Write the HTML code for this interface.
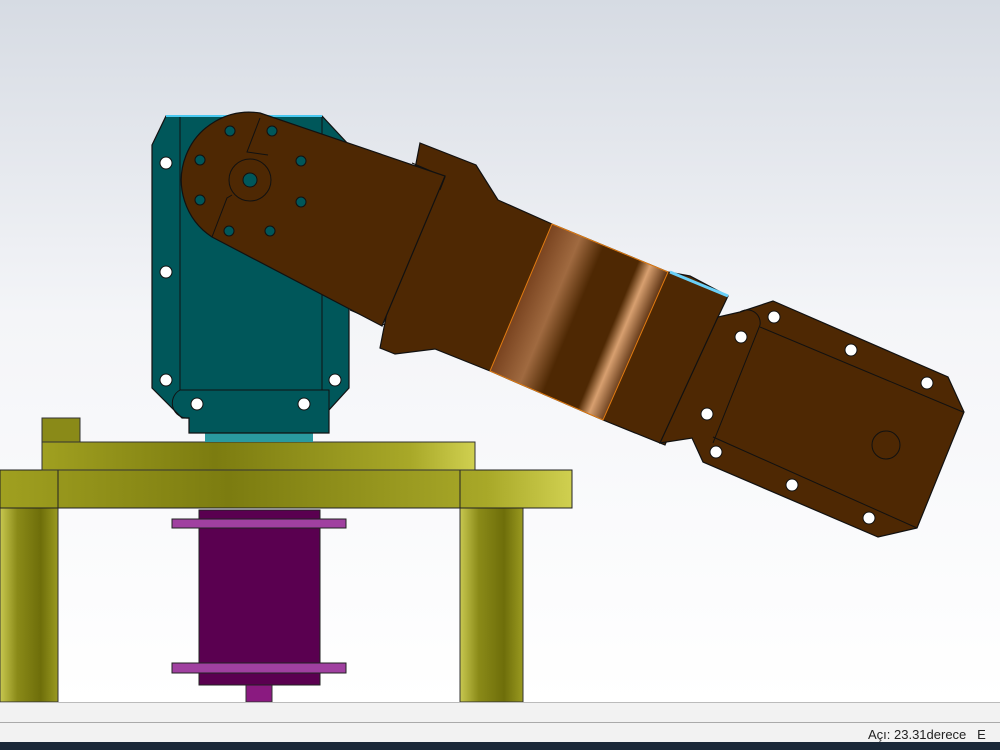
<!DOCTYPE html>
<html><head><style>
html,body{margin:0;padding:0;width:1000px;height:750px;overflow:hidden;background:#fff}
.st{position:absolute;font-family:"Liberation Sans",sans-serif;font-size:13px;color:#222}
</style></head><body>
<svg width="1000" height="750" viewBox="0 0 1000 750" style="position:absolute;left:0;top:0">
<defs>
<linearGradient id="bg" x1="0" y1="0" x2="0" y2="1"><stop offset="0" stop-color="#d6dbe3"/><stop offset="0.45" stop-color="#f4f5f8"/><stop offset="1" stop-color="#ffffff"/></linearGradient>
<linearGradient id="leg" x1="0" y1="0" x2="1" y2="0"><stop offset="0" stop-color="#c8c850"/><stop offset="0.3" stop-color="#8a8a18"/><stop offset="0.7" stop-color="#6e6e0a"/><stop offset="1" stop-color="#9a9a20"/></linearGradient>
<linearGradient id="plate" x1="0" y1="0" x2="1" y2="0"><stop offset="0" stop-color="#a0a020"/><stop offset="0.4" stop-color="#7c7c10"/><stop offset="0.85" stop-color="#a8a828"/><stop offset="1" stop-color="#d0d050"/></linearGradient>
<linearGradient id="band" x1="552" y1="224" x2="668" y2="272" gradientUnits="userSpaceOnUse"><stop offset="0" stop-color="#7a4420"/><stop offset="0.25" stop-color="#a06a40"/><stop offset="0.45" stop-color="#4e2803"/><stop offset="0.75" stop-color="#4e2803"/><stop offset="0.85" stop-color="#d8a070"/><stop offset="1" stop-color="#5a3010"/></linearGradient>
</defs>
<rect x="0" y="0" width="1000" height="702" fill="url(#bg)"/>
<!-- base -->
<rect x="0" y="508" width="58" height="194" fill="url(#leg)" stroke="#333" stroke-width="1"/>
<rect x="460" y="508" width="63" height="194" fill="url(#leg)" stroke="#333" stroke-width="1"/>
<rect x="0" y="470" width="572" height="38" fill="url(#plate)" stroke="#222" stroke-width="1"/>
<line x1="58" y1="470" x2="58" y2="508" stroke="#222"/><line x1="460" y1="470" x2="460" y2="508" stroke="#222"/>
<rect x="42" y="418" width="38" height="24" fill="#8a8a18" stroke="#333"/>
<rect x="42" y="442" width="433" height="28" fill="url(#plate)" stroke="#333"/>
<!-- motor -->
<rect x="246" y="684" width="26" height="18" fill="#8a1a80" stroke="#333"/>
<rect x="199" y="510" width="121" height="175" fill="#5a0050" stroke="#222"/>
<rect x="172" y="519" width="174" height="9" fill="#a040a0" stroke="#222"/>
<rect x="172" y="663" width="174" height="10" fill="#a040a0" stroke="#222"/>
<!-- servo -->
<rect x="205" y="432" width="108" height="10" fill="#2a9aa0"/>
<polygon points="166,116 322,116 349,145 349,388 329,410 329,433 189,433 189,418 182,418 152,388 152,145" fill="#00575a" stroke="#111" stroke-width="1.2"/>
<line x1="180" y1="116" x2="180" y2="390" stroke="#111"/><line x1="322" y1="116" x2="322" y2="390" stroke="#111"/>
<path d="M180,390 L329,390 L329,433 M189,418 A15,15 0 0 1 180,390" fill="none" stroke="#111"/>
<line x1="166" y1="116" x2="322" y2="116" stroke="#4ac8f0" stroke-width="2"/>
<g fill="#fff" stroke="#111"><circle cx="166" cy="163" r="6"/><circle cx="166" cy="272" r="6"/><circle cx="166" cy="380" r="6"/><circle cx="335" cy="380" r="6"/><circle cx="197" cy="404" r="6"/><circle cx="304" cy="404" r="6"/></g>
<!-- link2 -->
<polygon points="420,143 476,165 498,200 552,224 668,272 690,276 728,296 718,317 665,445 603,420 490,371 435,349 395,354 380,348" fill="#4e2803" stroke="#111" stroke-width="1.2"/>
<polygon points="552,224 668,272 603,420 490,371" fill="url(#band)" stroke="#e07a10" stroke-width="1"/>
<line x1="670" y1="272" x2="728" y2="296" stroke="#6ad0f8" stroke-width="3"/>
<path d="M412,163 L445,177 L440,190 M350,310 L385,325" fill="none" stroke="#111"/>
<!-- link3 -->
<polygon points="660,443 718,317 740,312 773,301 948,377 964,412 917,528 878,537 703,462 692,438" fill="#4e2803" stroke="#111" stroke-width="1.2"/>
<path d="M740,312 A13,13 0 0 1 760,325 L713,443 M760,327 L963,412 M713,437 L917,528" fill="none" stroke="#111"/>
<circle cx="886" cy="445" r="14" fill="none" stroke="#111"/>
<g fill="#fff" stroke="#111"><circle cx="774" cy="317" r="6"/><circle cx="741" cy="337" r="6"/><circle cx="851" cy="350" r="6"/><circle cx="927" cy="383" r="6"/><circle cx="707" cy="414" r="6"/><circle cx="716" cy="452" r="6"/><circle cx="792" cy="485" r="6"/><circle cx="869" cy="518" r="6"/></g>
<!-- link1 -->
<path d="M260,113 L445,176 L382,326 L212,237 A68,68 0 0 1 260,113 Z" fill="#4e2803" stroke="#111" stroke-width="1.2"/>
<path d="M260,118 L247,152 L268,155 M232,195 L227,198 L212,237" fill="none" stroke="#111"/>
<circle cx="250" cy="180" r="21" fill="none" stroke="#111"/>
<circle cx="250" cy="180" r="7" fill="#00575a" stroke="#111"/>
<g fill="#00575a" stroke="#111"><circle cx="230" cy="131" r="5"/><circle cx="272" cy="131" r="5"/><circle cx="200" cy="160" r="5"/><circle cx="301" cy="161" r="5"/><circle cx="200" cy="200" r="5"/><circle cx="301" cy="202" r="5"/><circle cx="229" cy="231" r="5"/><circle cx="270" cy="231" r="5"/></g>
<!-- bars -->
<rect x="0" y="702" width="1000" height="20" fill="#f2f2f2"/>
<line x1="0" y1="702.5" x2="1000" y2="702.5" stroke="#bbb"/>
<line x1="0" y1="722.5" x2="1000" y2="722.5" stroke="#aaa"/>
<rect x="0" y="723" width="1000" height="19" fill="#f2f2f2"/>
<rect x="0" y="742" width="1000" height="8" fill="#1a2838"/>
</svg>
<div class="st" style="left:868px;top:727px">Açı: 23.31derece&nbsp;&nbsp;&nbsp;E</div>
</body></html>
